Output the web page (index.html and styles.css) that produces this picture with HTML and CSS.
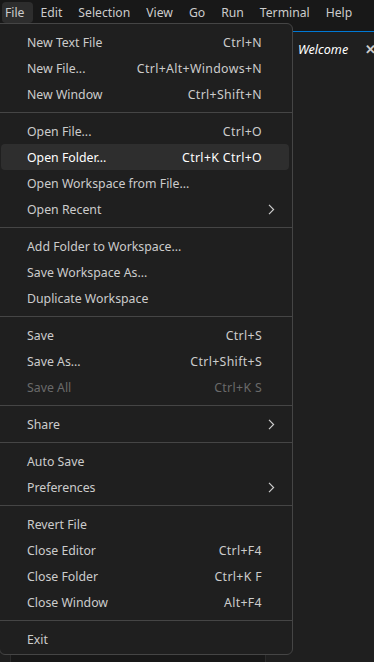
FILE: index.html
```html
<!DOCTYPE html>
<html>
<head>
<meta charset="utf-8">
<link rel="stylesheet" href="styles.css">
</head>
<body>
<div class="titlebar">
  <div class="menubar">
    <span class="mb-item active first">File</span>
    <span class="mb-item">Edit</span>
    <span class="mb-item">Selection</span>
    <span class="mb-item">View</span>
    <span class="mb-item">Go</span>
    <span class="mb-item">Run</span>
    <span class="mb-item">Terminal</span>
    <span class="mb-item">Help</span>
  </div>
</div>
<div class="main">
  <div class="tabstrip">
    <div class="tab">
      <span class="tab-label">Welcome</span>
      <span class="tab-close">&#x2715;</span>
    </div>
  </div>
  <div class="editor">
    <div class="editor-box"></div>
  </div>
</div>

<div class="menu">
  <div class="item"><span class="label">New Text File</span><span class="key">Ctrl+N</span></div>
  <div class="item"><span class="label">New File...</span><span class="key">Ctrl+Alt+Windows+N</span></div>
  <div class="item"><span class="label">New Window</span><span class="key">Ctrl+Shift+N</span></div>
  <div class="sep"></div>
  <div class="item"><span class="label">Open File...</span><span class="key">Ctrl+O</span></div>
  <div class="item hl"><span class="label">Open Folder...</span><span class="key">Ctrl+K Ctrl+O</span></div>
  <div class="item"><span class="label">Open Workspace from File...</span></div>
  <div class="item"><span class="label">Open Recent</span><svg class="chev" width="7" height="11" viewBox="0 0 7 11"><path d="M1 0.8L5.6 5.5L1 10.2" fill="none" stroke="#cccccc" stroke-width="1.2"/></svg></div>
  <div class="sep"></div>
  <div class="item"><span class="label">Add Folder to Workspace...</span></div>
  <div class="item"><span class="label">Save Workspace As...</span></div>
  <div class="item"><span class="label">Duplicate Workspace</span></div>
  <div class="sep"></div>
  <div class="item"><span class="label">Save</span><span class="key">Ctrl+S</span></div>
  <div class="item"><span class="label">Save As...</span><span class="key">Ctrl+Shift+S</span></div>
  <div class="item disabled"><span class="label">Save All</span><span class="key">Ctrl+K S</span></div>
  <div class="sep"></div>
  <div class="item"><span class="label">Share</span><svg class="chev" width="7" height="11" viewBox="0 0 7 11"><path d="M1 0.8L5.6 5.5L1 10.2" fill="none" stroke="#cccccc" stroke-width="1.2"/></svg></div>
  <div class="sep"></div>
  <div class="item"><span class="label">Auto Save</span></div>
  <div class="item"><span class="label">Preferences</span><svg class="chev" width="7" height="11" viewBox="0 0 7 11"><path d="M1 0.8L5.6 5.5L1 10.2" fill="none" stroke="#cccccc" stroke-width="1.2"/></svg></div>
  <div class="sep"></div>
  <div class="item"><span class="label">Revert File</span></div>
  <div class="item"><span class="label">Close Editor</span><span class="key">Ctrl+F4</span></div>
  <div class="item"><span class="label">Close Folder</span><span class="key">Ctrl+K F</span></div>
  <div class="item"><span class="label">Close Window</span><span class="key">Alt+F4</span></div>
  <div class="sep"></div>
  <div class="item"><span class="label">Exit</span></div>
</div>
</body>
</html>
```

FILE: styles.css
```css
html, body {
  margin: 0;
  padding: 0;
}
body {
  width: 374px;
  height: 662px;
  overflow: hidden;
  background: #181818;
  font-family: "Noto Sans", "Open Sans", sans-serif;
  font-size: 12.3px;
  color: #cccccc;
  position: relative;
}
.titlebar {
  height: 31px;
  background: #181818;
}
.menubar {
  display: flex;
  padding: 2px 0 0 2px;
}
.mb-item {
  height: 21px;
  line-height: 21px;
  padding: 0 8px;
  border-radius: 4px;
  color: #cccccc;
  font-size: 12.2px;
}
.mb-item.first {
  padding-left: 3px;
}
.mb-item.active {
  background: #2d2d2d;
}
.main {
  display: flex;
  flex-direction: column;
}
.tabstrip {
  height: 35px;
  display: flex;
  padding-left: 293px;
  background: #181818;
}
.tab {
  flex: 1;
  background: #1f1f1f;
  border-top: 1px solid #0078d4;
  display: flex;
  align-items: center;
  padding-left: 5px;
  gap: 17px;
  height: 34px;
}
.tab-label {
  font-style: italic;
  color: #ffffff;
  font-size: 12.6px;
}
.tab-close {
  font-size: 13px;
  font-weight: bold;
  color: #cccccc;
}
.editor {
  background: #1f1f1f;
  height: 596px;
  box-sizing: border-box;
  padding-top: 589px;
}
.editor-box {
  margin-left: 10px;
  width: 254px;
  height: 7px;
  background: #181818;
  border-left: 1px solid #2b2b2b;
  border-right: 1px solid #2b2b2b;
}
.menu {
  position: absolute;
  left: -1px;
  top: 23px;
  width: 292px;
  background: #1f1f1f;
  border: 1px solid #454545;
  border-radius: 0 6px 6px 6px;
  padding: 5px 0 2px 0;
  box-sizing: content-box;
}
.item {
  height: 26px;
  margin: 0 3px 0 1px;
  padding: 0 27px 0 26px;
  display: flex;
  align-items: center;
  justify-content: space-between;
  border-radius: 4px;
  white-space: nowrap;
}
.item .key {
  letter-spacing: 0.35px;
}
.item.hl {
  background: #2e2e2e;
  color: #ffffff;
}
.item.disabled {
  color: #6a6a6a;
}
.chev {
  margin-right: -13px;
}
.sep {
  height: 1px;
  background: #454545;
  margin: 5px 0;
}
```
